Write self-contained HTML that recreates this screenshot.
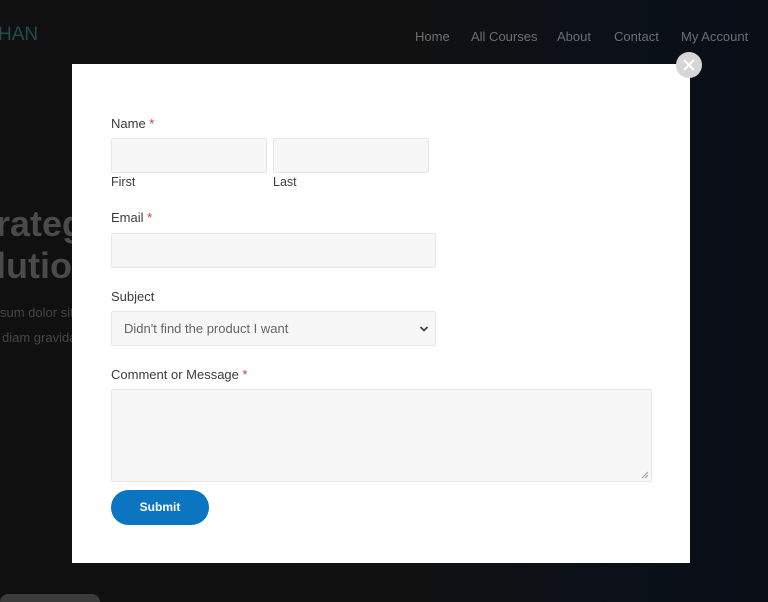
<!DOCTYPE html>
<html style="width:768px;height:602px;overflow:hidden"><head><meta charset="utf-8"><style>
*{box-sizing:border-box;margin:0;padding:0}
body{width:768px;height:602px;overflow:hidden;position:relative;font-family:"Liberation Sans",Arial,sans-serif;background:linear-gradient(90deg,#101010 0%,#111111 55%,#0b1019 80%,#090e17 100%)}
.bg{position:absolute;color:#3a3a3a}
.nav{position:absolute;top:29px;font-size:13px;color:#6b6e73}
.modal{position:absolute;left:72px;top:64px;width:618px;height:499px;background:#fff}
.close{position:absolute;left:676px;top:52px;width:26px;height:26px;border-radius:50%;background:#d6d6d6}
.lbl{position:absolute;font-size:13px;color:#3c3c3c}
.lbl b{color:#d9332f;font-weight:normal}
.in{position:absolute;background:#f7f7f7;border:1px solid #e6e6e6;border-radius:2px}
.sub{position:absolute;font-size:12.5px;color:#3c3c3c}
</style></head><body>
<div class="bg" style="left:-2px;top:24px;font-size:19px;color:#1e4d4f">HAN</div>
<div class="nav" style="left:415px">Home</div>
<div class="nav" style="left:471px">All Courses</div>
<div class="nav" style="left:557px">About</div>
<div class="nav" style="left:614px">Contact</div>
<div class="nav" style="left:681px">My Account</div>
<div class="bg" style="left:-4px;top:203px;font-size:36px;font-weight:bold;color:#4a4a4a">rateg</div>
<div class="bg" style="left:-4px;top:245px;font-size:36px;font-weight:bold;color:#4a4a4a">lutio</div>
<div class="bg" style="left:0;top:305px;font-size:13px;color:#464646">sum dolor sit</div>
<div class="bg" style="left:2px;top:330px;font-size:13px;color:#464646">diam gravida</div>
<div style="position:absolute;left:0;top:594px;width:100px;height:8px;border-radius:8px 8px 0 0;background:#3b3b3b"></div>
<div class="modal">
 <div class="lbl" style="left:39px;top:52px">Name <b>*</b></div>
 <div class="in" style="left:39px;top:74px;width:156px;height:35px"></div>
 <div class="in" style="left:201px;top:74px;width:156px;height:35px"></div>
 <div class="sub" style="left:39px;top:111px">First</div>
 <div class="sub" style="left:201px;top:111px">Last</div>
 <div class="lbl" style="left:39px;top:146px">Email <b>*</b></div>
 <div class="in" style="left:39px;top:169px;width:325px;height:35px"></div>
 <div class="lbl" style="left:39px;top:225px">Subject</div>
 <div class="in" style="left:39px;top:247px;width:325px;height:35px;font-size:13px;color:#666;padding:9px 0 0 12px">Didn't find the product I want
  <svg style="position:absolute;right:6px;top:13px" width="10" height="8" viewBox="0 0 10 8"><path d="M1.5 2l3.5 3.5L8.5 2" stroke="#444" stroke-width="1.8" fill="none"/></svg></div>
 <div class="lbl" style="left:39px;top:303px">Comment or Message <b>*</b></div>
 <div class="in" style="left:39px;top:325px;width:541px;height:93px">
  <svg style="position:absolute;right:2px;bottom:2px" width="8" height="8"><path d="M1 7L7 1M4 7L7 4" stroke="#999" stroke-width="1"/></svg></div>
 <div style="position:absolute;left:39px;top:426px;width:98px;height:35px;border-radius:18px;background:#0b75c1;color:#fff;font-size:12px;font-weight:bold;text-align:center;line-height:35px">Submit</div>
</div>
<div class="close"><svg width="26" height="26"><path d="M8 8L18 18M18 8L8 18" stroke="#fff" stroke-width="2"/></svg></div>
</body></html>
